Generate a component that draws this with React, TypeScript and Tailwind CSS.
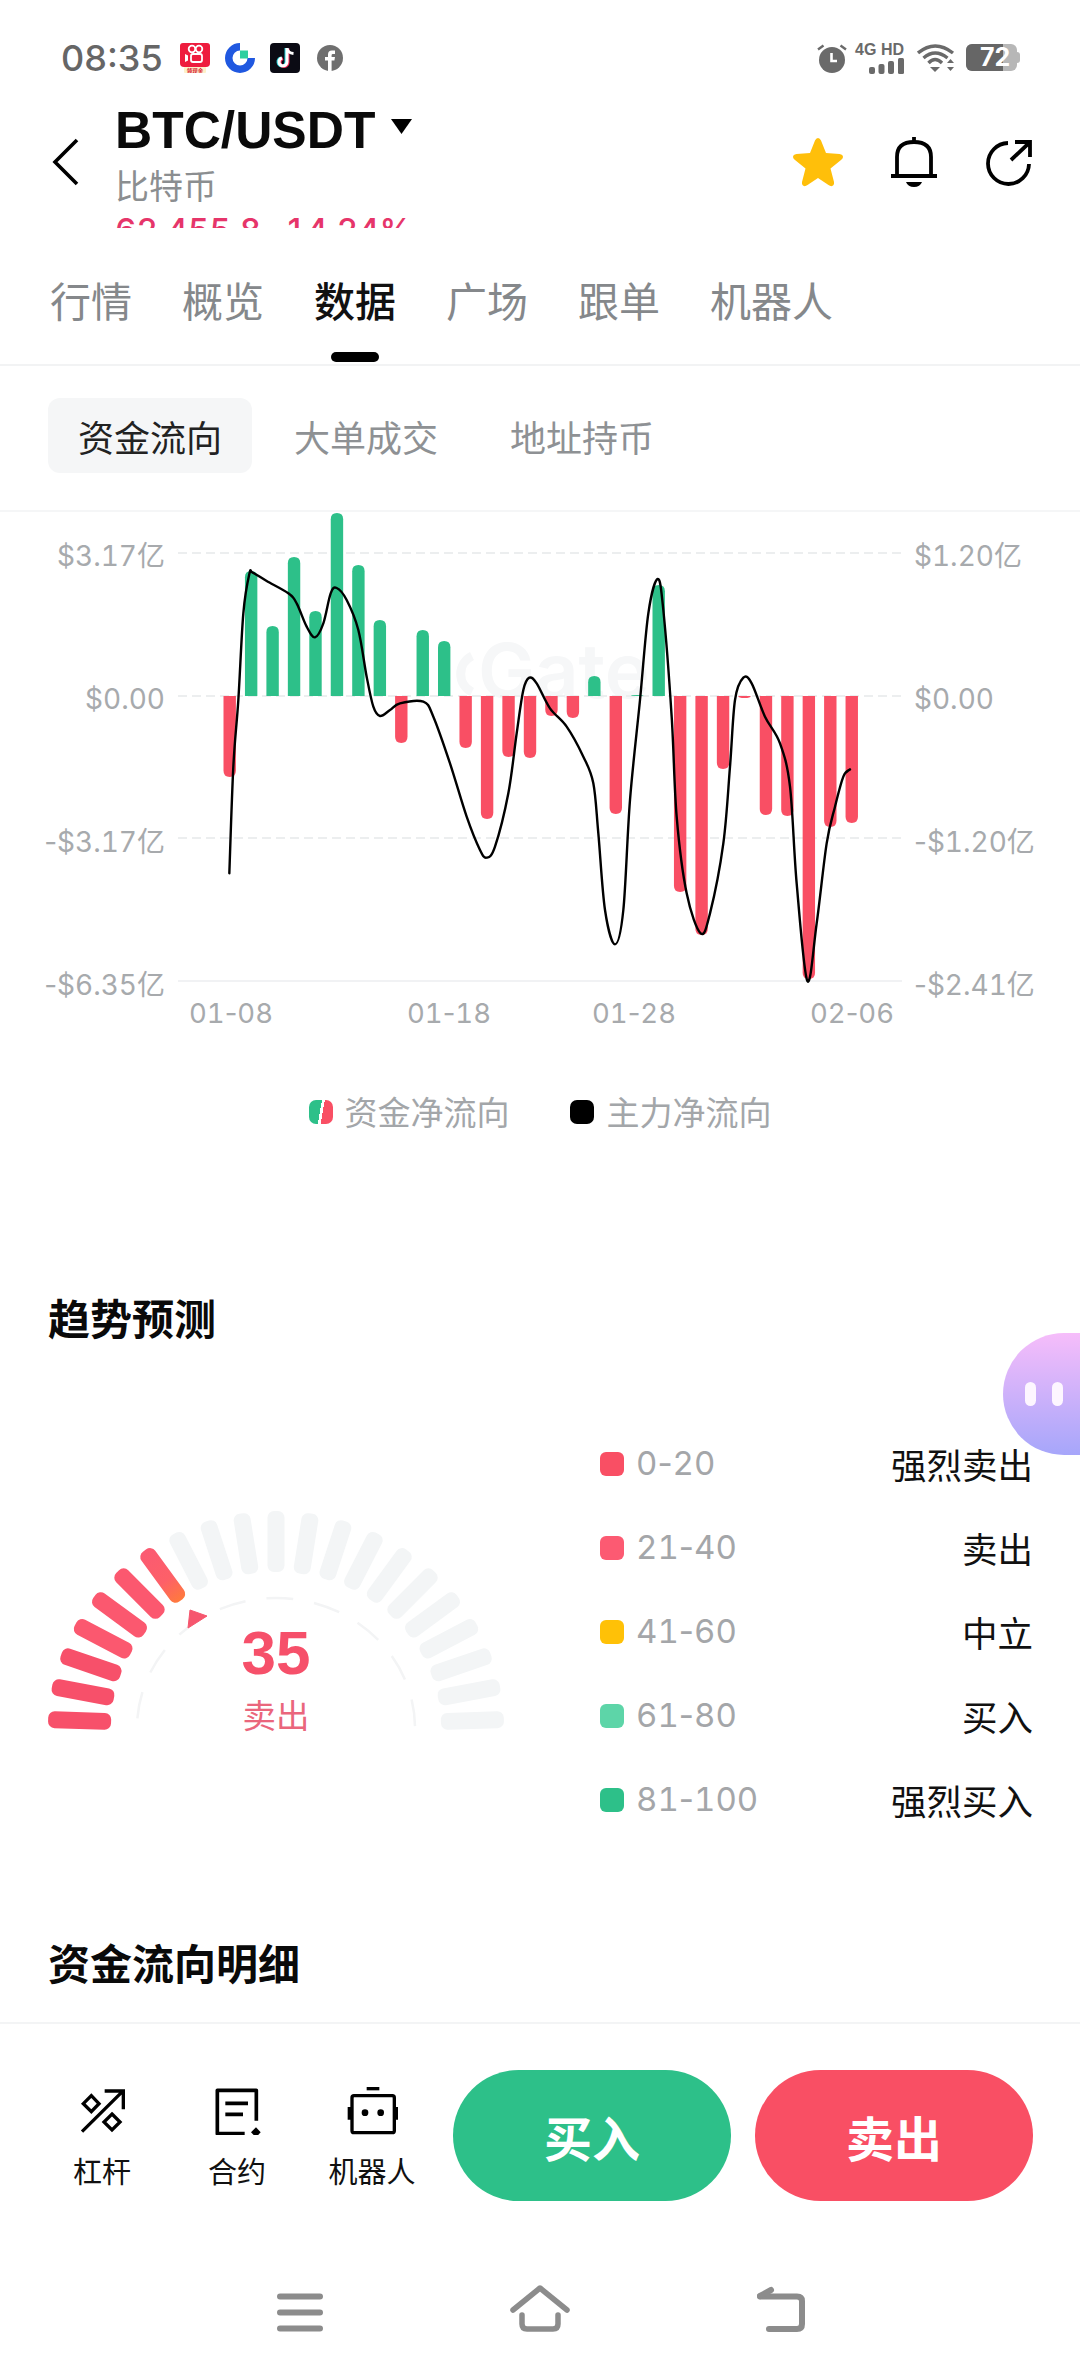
import React from 'react';

const CJK = "font-['Noto_Sans_CJK_SC',sans-serif]";
const NUM = "font-['Inter','Noto_Sans_CJK_SC',sans-serif] tabular-nums";

const GREEN = '#2dc089';
const RED = '#f94f64';

// bars: page x comes from the index, value is the page y of the free end
const ZERO = 696;
const BARS = [777, 571, 626, 557, 611, 513, 565, 620, 743, 630, 641, 748, 819, 757, 758, 716, 718, 676, 814, 695, 585, 892, 935, 769, 698, 815, 816, 979, 827, 823];

const LINE_A = [[88, 1120], [100, 800], [115, 600], [130, 340], [148, 222], [158, 218], [200, 243], [265, 280], [290, 310], [320, 380], [345, 412], [370, 370], [392, 280], [410, 264], [440, 300], [475, 390], [500, 530], [520, 620], [540, 648], [570, 630], [600, 610], [670, 605], [700, 650], [750, 790], [800, 950], [840, 1050], [860, 1073], [885, 1040], [925, 880], [950, 700], [970, 570], [988, 533], [1010, 550], [1050, 625], [1100, 680], [1150, 770], [1180, 850], [1195, 1000], [1215, 1230], [1245, 1333], [1270, 1230], [1290, 900], [1320, 600], [1345, 340]];
const LINE_B = [[293, 237], [310, 330], [335, 650], [350, 950], [380, 1180], [422, 1300], [450, 1240], [490, 1030], [510, 800], [525, 600], [550, 533], [575, 550], [615, 650], [660, 730], [690, 860], [710, 1150], [742, 1443], [770, 1270], [800, 1030], [825, 920], [850, 830], [870, 808]];

function linePath() {
  const pts = [
    ...LINE_A.map(([x, y]) => [200 + x / 3, 500 + y / 3]),
    ...LINE_B.map(([x, y]) => [560 + x / 3, 500 + y / 3]),
  ];
  let d = `M${pts[0][0]} ${pts[0][1]}`;
  for (let i = 0; i < pts.length - 1; i++) {
    const p0 = pts[Math.max(i - 1, 0)];
    const p1 = pts[i];
    const p2 = pts[i + 1];
    const p3 = pts[Math.min(i + 2, pts.length - 1)];
    d += `C${p1[0] + (p2[0] - p0[0]) / 6} ${p1[1] + (p2[1] - p0[1]) / 6} ${p2[0] - (p3[0] - p1[0]) / 6} ${p2[1] - (p3[1] - p1[1]) / 6} ${p2[0]} ${p2[1]}`;
  }
  return d;
}

function barPath(i: number, end: number) {
  const x = 229.7 + 21.45 * i;
  const hw = 6.2;
  const up = end < ZERO;
  const r = Math.min(hw, Math.abs(end - ZERO));
  const s = up ? 1 : -1;
  return `M${x - hw} ${ZERO}V${end + s * r}Q${x - hw} ${end} ${x} ${end}Q${x + hw} ${end} ${x + hw} ${end + s * r}V${ZERO}Z`;
}

// digits stay tabular, the hyphen keeps its normal width
function Num({ text }: { text: string }) {
  const parts = text.split('-');
  return (
    <>
      {parts.map((part, i) => (
        <React.Fragment key={i}>
          {i > 0 && <span className="normal-nums">-</span>}
          {part}
        </React.Fragment>
      ))}
    </>
  );
}

function Chart() {
  return (
    <svg width="724" height="476" viewBox="178 512 724 476" className="block shrink-0">
      {[553, 696, 838].map((y) => (
        <line key={y} x1="178" x2="902" y1={y} y2={y} stroke="#eceeef" strokeWidth="2" strokeDasharray="9 5" />
      ))}
      <line x1="178" x2="902" y1="981" y2="981" stroke="#f1f2f4" strokeWidth="2" />
      {BARS.map((end, i) => (
        <path key={i} d={barPath(i, end)} fill={end < ZERO ? GREEN : RED} />
      ))}
      <path d={linePath()} fill="none" stroke="#000" strokeWidth="2.4" strokeLinejoin="round" strokeLinecap="round" />
    </svg>
  );
}

function Gauge() {
  const cx = 276;
  const cy = 1727;
  const bars = Array.from({ length: 21 }, (_, i) => {
    const a = ((178 - i * 8.8) * Math.PI) / 180;
    const c = Math.cos(a);
    const s = Math.sin(a);
    const x1 = cx + 228 * c;
    const y1 = cy - 216 * s;
    const x2 = cx + 165 * c;
    const y2 = cy - 155 * s;
    return {
      i,
      x1,
      y1,
      len: Math.hypot(x2 - x1, y2 - y1),
      deg: (Math.atan2(y2 - y1, x2 - x1) * 180) / Math.PI,
    };
  });
  return (
    <svg width="480" height="260" viewBox="40 1490 480 260" className="block">
      <defs>
        <linearGradient id="tip" x1="0" y1="0" x2="1" y2="0">
          <stop offset="0" stopColor="#fb5a72" />
          <stop offset="0.6" stopColor="#fd6068" />
          <stop offset="1" stopColor="#ff7a3d" />
        </linearGradient>
      </defs>
      <ellipse cx={cx} cy="1728" rx="139" ry="130" fill="none" stroke="#f3f4f5" strokeWidth="2.5" strokeDasharray="28 22" pathLength="880" />
      <rect x="40" y="1728" width="480" height="30" fill="#fff" />
      {bars.map((b) => (
        <rect
          key={b.i}
          x={b.x1}
          y={b.y1 - 8.5}
          width={b.len}
          height="17"
          rx="6.5"
          transform={`rotate(${b.deg} ${b.x1} ${b.y1})`}
          fill={b.i < 6 ? (b.i < 3 ? '#f7506a' : '#fb586f') : b.i === 6 ? 'url(#tip)' : '#f3f5f6'}
        />
      ))}
      <path d="M190 1610L207 1616L188 1628Z" fill="#f6566e" stroke="#f6566e" strokeWidth="1" strokeLinejoin="round" />
    </svg>
  );
}

function StatusIcons() {
  return (
    <div className="flex items-center">
      {/* 快手 */}
      <svg width="30" height="30" viewBox="0 0 30 30" className="ml-[17px]">
        <path d="M3 0H27Q30 0 30 3V20Q30 24 26 24H4Q0 24 0 20V3Q0 0 3 0Z" fill="#ee1c3e" />
        <rect x="4" y="24" width="22" height="6" rx="1" fill="#fdf1c9" />
        <text x="15" y="29.5" fontSize="5.5" textAnchor="middle" fill="#d8152f" fontWeight="700" fontFamily="Noto Sans CJK SC">领现金</text>
        <circle cx="12" cy="6" r="3.3" fill="none" stroke="#fff" strokeWidth="1.8" />
        <circle cx="19" cy="6" r="3.3" fill="none" stroke="#fff" strokeWidth="1.8" />
        <rect x="11" y="11" width="11" height="8" rx="2" fill="none" stroke="#fff" strokeWidth="1.8" />
        <path d="M8 12.5L5 11V19L8 17.5Z" fill="#fff" />
      </svg>
      {/* gate */}
      <svg width="30" height="30" viewBox="0 0 30 30" className="ml-[15px]">
        <path d="M15 0A15 15 0 1 0 30 15H22.5A7.5 7.5 0 1 1 15 7.5Z" fill="#2058e0" />
        <rect x="15" y="7.5" width="8" height="8" fill="#2ecfa0" />
      </svg>
      {/* tiktok */}
      <svg width="30" height="30" viewBox="0 0 30 30" className="ml-[15px]">
        <rect width="30" height="30" rx="4" fill="#0b0b14" />
        <path d="M17 5V19A4 4 0 1 1 12 15" fill="none" stroke="#25d4dc" strokeWidth="3" transform="translate(-1 0)" />
        <path d="M17 5V19A4 4 0 1 1 12 15" fill="none" stroke="#f5305c" strokeWidth="3" transform="translate(1 0.6)" />
        <path d="M17 5V19A4 4 0 1 1 12 15" fill="none" stroke="#fff" strokeWidth="3" />
        <path d="M17 5.5Q18 10 23.5 10.5" fill="none" stroke="#fff" strokeWidth="3" />
      </svg>
      {/* facebook */}
      <svg width="26" height="26" viewBox="0 0 26 26" className="ml-[17px]">
        <circle cx="13" cy="13" r="13" fill="#6f6f6f" />
        <path d="M11 26V15.5H8V12H11V9.5Q11 5.5 15 5.5H18V9H15.8Q14.6 9 14.6 10.2V12H18L17.4 15.5H14.6V26Z" fill="#fff" />
      </svg>
    </div>
  );
}

function StatusRight() {
  return (
    <div className="flex items-center pr-[60px]">
      <svg width="30" height="30" viewBox="0 0 30 30">
        <circle cx="15" cy="17" r="13" fill="#6a6a6a" />
        <path d="M14.5 10V18H20" fill="none" stroke="#fff" strokeWidth="2.6" />
        <path d="M1 6.5L6.5 2.5M29 6.5L23.5 2.5" stroke="#6a6a6a" strokeWidth="2.4" />
      </svg>
      <div className="ml-[9px] flex w-[48px] flex-col items-end">
        <span className="font-['Liberation_Sans',sans-serif] text-[16px] leading-[15px] font-bold whitespace-nowrap text-[#6a6a6a]">4G HD</span>
        <svg width="35" height="16" viewBox="0 0 35 16" className="mt-[1px]">
          <rect x="0" y="9" width="6" height="7" rx="2" fill="#6a6a6a" />
          <rect x="9.5" y="6" width="6" height="10" rx="2" fill="#6a6a6a" />
          <rect x="19" y="3" width="6" height="13" rx="2" fill="#6a6a6a" />
          <rect x="29" y="0" width="6" height="16" rx="1.5" fill="#6a6a6a" />
        </svg>
      </div>
      <svg width="38" height="30" viewBox="0 0 38 30" className="ml-[13px]">
        <path d="M1 10Q18 -4 36 10M6.5 15Q18 5 30.5 15M11.5 20Q18 13 25 20" fill="none" stroke="#6a6a6a" strokeWidth="3.4" />
        <path d="M13 24H23L18 29Z" fill="#6a6a6a" />
        <path d="M30 20L33.5 16L37 20ZM30 24H37L33.5 28Z" fill="#6a6a6a" />
      </svg>
      <div className="relative ml-[11px] h-[27px] w-[54px]">
        <div className="absolute left-0 top-0 h-full w-[51px] rounded-[6px] bg-[#b7b7b7]" />
        <div className="absolute right-0 top-[8px] h-[11px] w-[4px] rounded-r-[3px] bg-[#b7b7b7]" />
        <div className="absolute left-0 top-0 h-full w-[37px] rounded-l-[6px] bg-[#666666]" />
        <span className="absolute left-[14px] top-[-1px] font-['Inter',sans-serif] text-[25px] leading-[29px] font-bold text-white">72</span>
      </div>
    </div>
  );
}

function Leverage() {
  return (
    <svg width="48" height="48" viewBox="50 38 144 144" fill="none" stroke="#000" strokeWidth="10">
      <path d="M62 172L183 52M130 50H186V105" />
      <path d="M90 64L113 88L90 112L66 88Z" />
      <path d="M152 119L176 143L152 167L128 143Z" />
    </svg>
  );
}

function Contract() {
  return (
    <svg width="48" height="48" viewBox="460 32 144 144" fill="none" stroke="#000" strokeWidth="11">
      <path d="M590 133V42H473V172H555" strokeLinejoin="round" />
      <path d="M497 81H565M497 114H550" />
      <path d="M589 153L603 168L589 183L574 168Z" fill="#000" stroke="none" />
    </svg>
  );
}

function Robot() {
  return (
    <svg width="52" height="52" viewBox="858 32 156 156" fill="none" stroke="#000" strokeWidth="10">
      <rect x="876" y="64" width="127" height="111" rx="6" />
      <path d="M920 43H958" />
      <path d="M868 98V136M1010 98V136" />
      <circle cx="915" cy="115" r="10" fill="#000" stroke="none" />
      <circle cx="962" cy="115" r="10" fill="#000" stroke="none" />
    </svg>
  );
}

const TABS = ['行情', '概览', '数据', '广场', '跟单', '机器人'];
const RANGES = [
  { c: 'bg-[#f94f64]', r: '0-20', t: '强烈卖出' },
  { c: 'bg-[#fc5a72]', r: '21-40', t: '卖出' },
  { c: 'bg-[#ffc107]', r: '41-60', t: '中立' },
  { c: 'bg-[#5dd5a8]', r: '61-80', t: '买入' },
  { c: 'bg-[#2dc089]', r: '81-100', t: '强烈买入' },
];

export default function App() {
  return (
    <div className={`relative flex h-[2376px] w-[1080px] flex-col overflow-hidden bg-white ${CJK}`}>
      {/* status bar */}
      <div className="flex h-[100px] shrink-0 items-center justify-between pl-[61px] pt-[15px]">
        <div className="flex items-center">
          <span className="font-['Inter',sans-serif] text-[36px] font-medium text-[#666666]">08:35</span>
          <StatusIcons />
        </div>
        <StatusRight />
      </div>

      {/* header */}
      <div className="flex h-[128px] shrink-0 items-start overflow-hidden">
        <svg width="28" height="48" viewBox="0 0 28 48" className="ml-[52px] mt-[38px] shrink-0">
          <path d="M25 2L3 24L25 46" fill="none" stroke="#000" strokeWidth="3.6" />
        </svg>
        <div className="ml-[35px] flex flex-col">
          <div className="flex h-[60px] items-center">
            <span className="font-['Liberation_Sans',sans-serif] text-[51.5px] leading-[60px] font-bold text-[#0a0a0a]">BTC/USDT</span>
            <svg width="21" height="15" viewBox="0 0 21 15" className="ml-[16px] mt-[-8px]">
              <path d="M0 0H21L10.5 15Z" fill="#000" />
            </svg>
          </div>
          <span className="h-[50px] text-[34px] leading-[50px] text-[#8b8e90]">比特币</span>
          <span className={`${NUM} text-[33px] leading-[40px] font-medium whitespace-pre text-[#e6356a]`}><Num text="62,455.8 -14.24%" /></span>
        </div>
        <div className="ml-auto mr-[47px] mt-[36px] flex items-center">
          <svg width="54" height="52" viewBox="0 0 54 52">
            <path d="M27 2Q29 2 30 4.5L35 17L48.500 18Q52 18.500 52 21Q52 22.500 50 24L39.500 32.500L43 46Q43.500 49 41 50Q39.500 50.500 37.500 49L27 42L16.500 49Q14.500 50.500 13 50Q10.500 49 11 46L14.500 32.500L4 24Q2 22.500 2 21Q2 18.500 5.500 18L19 17L24 4.500Q25 2 27 2Z" fill="#ffbf0a" />
          </svg>
          <svg width="48" height="52" viewBox="0 0 48 52" className="ml-[45px]" fill="none" stroke="#000" strokeWidth="3.8">
            <path d="M7 39V21Q7 6 24 6Q41 6 41 21V39" />
            <path d="M1 40H47" strokeWidth="4" />
            <path d="M24 1V6" />
            <path d="M16 46H32Q30 51 24 51Q18 51 16 46Z" fill="#000" stroke="none" />
          </svg>
          <svg width="48" height="48" viewBox="0 0 48 48" className="ml-[47px]" fill="none" stroke="#000" strokeWidth="3.8">
            <path d="M23 5A20.500 20.500 0 1 0 44 26" />
            <path d="M26 22L44 5M30 4H45V19" />
          </svg>
        </div>
      </div>

      {/* tabs */}
      <div className="h-[138px] shrink-0 border-b-2 border-[#f2f3f4] pt-[47px]">
        <div className="flex gap-[50px] pl-[50px]">
          {TABS.map((tab) => (
            <div key={tab} className={`relative text-[41px] leading-[48px] ${tab === '数据' ? 'font-medium text-[#111111]' : 'text-[#85888b]'}`}>
              {tab}
              {tab === '数据' && (
                <div className="absolute left-1/2 top-[77px] h-[10px] w-[48px] -translate-x-1/2 rounded-full bg-black" />
              )}
            </div>
          ))}
        </div>
      </div>

      {/* sub tabs */}
      <div className="flex h-[146px] shrink-0 items-start gap-3 border-b-2 border-[#f5f6f7] pl-[48px] pt-[32px]">
        <div className="flex h-[75px] items-center rounded-[12px] bg-[#f5f6f7] px-[30px] text-[36px] text-[#222222]">资金流向</div>
        <div className="flex h-[75px] items-center px-[30px] text-[36px] text-[#8e9194]">大单成交</div>
        <div className="flex h-[75px] items-center px-[30px] text-[36px] text-[#8e9194]">地址持币</div>
      </div>

      {/* chart */}
      <div className="relative flex h-[476px] shrink-0">
        <div className="absolute left-[448px] top-[118px] flex items-center text-[#f6f7f8]">
          <svg width="28" height="48" viewBox="0 0 28 48" className="mt-[8px]">
            <path d="M24 6A20 20 0 0 0 24 42" fill="none" stroke="#f6f7f8" strokeWidth="9" />
          </svg>
          <span className="ml-[2px] font-['Inter',sans-serif] text-[76px] leading-[80px] font-semibold">Gate</span>
        </div>
        <div className={`${NUM} relative flex w-[178px] shrink-0 flex-col items-end gap-[103px] pr-[13px] pt-[24px] text-[28px] leading-[40px] text-[#a7aaad]`}>
          <span>$3.17亿</span>
          <span>$0.00</span>
          <span><Num text="-$3.17亿" /></span>
          <span><Num text="-$6.35亿" /></span>
        </div>
        <div className="relative">
          <Chart />
        </div>
        <div className={`${NUM} relative flex flex-col gap-[103px] whitespace-nowrap pl-[12px] pt-[24px] text-[28px] leading-[40px] text-[#a7aaad]`}>
          <span>$1.20亿</span>
          <span>$0.00</span>
          <span><Num text="-$1.20亿" /></span>
          <span><Num text="-$2.41亿" /></span>
        </div>
      </div>

      {/* x axis */}
      <div className={`${NUM} mt-[3px] flex h-[44px] shrink-0 whitespace-nowrap text-[27.5px] leading-[44px] text-[#a7aaad]`}>
        <span className="ml-[189px] w-[81px] text-center"><Num text="01-08" /></span>
        <span className="ml-[137px] w-[81px] text-center"><Num text="01-18" /></span>
        <span className="ml-[104px] w-[81px] text-center"><Num text="01-28" /></span>
        <span className="ml-[137px] w-[81px] text-center"><Num text="02-06" /></span>
      </div>

      {/* chart legend */}
      <div className="mt-[53px] flex h-[48px] shrink-0 items-center justify-center text-[33px] text-[#a3a6a9]">
        <div className="h-[24px] w-[24px] overflow-hidden rounded-[7px] bg-[linear-gradient(100deg,#2dc089_46%,#ffffff_46%,#ffffff_56%,#f94f64_56%)]" />
        <span className="ml-[12px]">资金净流向</span>
        <div className="ml-[60px] h-[24px] w-[24px] rounded-[7px] bg-black" />
        <span className="ml-[13px]">主力净流向</span>
      </div>

      {/* trend forecast */}
      <div className="mt-[153px] h-[56px] shrink-0 pl-[48px] text-[42px] leading-[56px] font-bold text-[#0a0a0a]">趋势预测</div>

      <div className="mt-[77px] flex h-[420px] shrink-0 items-start">
        <div className="relative ml-[40px] mt-[68px] h-[260px] w-[480px] shrink-0">
          <Gauge />
          <div className="absolute inset-x-0 top-[129px] flex flex-col items-center pr-[8px]">
            <span className="font-['Liberation_Sans',sans-serif] text-[62px] leading-[68px] font-bold text-[#f6506a]">35</span>
            <span className="mt-[5px] text-[33.500px] leading-[44px] text-[#ea667c]">卖出</span>
          </div>
        </div>
        <div className="ml-[80px] flex w-[433px] flex-col">
          {RANGES.map((row) => (
            <div key={row.r} className="flex h-[84px] items-center">
              <div className={`h-[24px] w-[24px] rounded-[6px] ${row.c}`} />
              <span className={`${NUM} ml-[12px] text-[33px] text-[#a4a6a9]`}><Num text={row.r} /></span>
              <span className="ml-auto text-[35.500px] text-[#111111]">{row.t}</span>
            </div>
          ))}
        </div>
      </div>

      {/* flow detail */}
      <div className="mt-[92px] h-[56px] shrink-0 pl-[48px] text-[42px] leading-[56px] font-bold text-[#0a0a0a]">资金流向明细</div>

      {/* floating assistant */}
      <div className="absolute right-0 top-[1333px] flex h-[122px] w-[77px] items-center gap-[16px] rounded-l-full bg-[linear-gradient(180deg,#f6bdfa,#a6a6fa)] pl-[22px]">
        <div className="h-[24px] w-[11px] rounded-full bg-[#fdf6ff]" />
        <div className="h-[24px] w-[11px] rounded-full bg-[#fdf6ff]" />
      </div>

      {/* bottom bar */}
      <div className="absolute inset-x-0 top-[2022px] flex h-[200px] items-start border-t-2 border-[#f3f4f5] pt-[46px]">
        <div className="flex w-[453px] shrink-0 items-start pl-[58px] pt-[15px]">
          <div className="flex w-[88px] flex-col items-center">
            <div className="flex h-[52px] items-center"><Leverage /></div>
            <span className="mt-[13px] text-[29px] leading-[40px] text-[#111111]">杠杆</span>
          </div>
          <div className="ml-[47px] flex w-[88px] flex-col items-center">
            <div className="flex h-[52px] items-center"><Contract /></div>
            <span className="mt-[13px] text-[29px] leading-[40px] text-[#111111]">合约</span>
          </div>
          <div className="ml-[47px] flex w-[88px] flex-col items-center">
            <div className="flex h-[52px] items-center"><Robot /></div>
            <span className="mt-[13px] whitespace-nowrap text-[29px] leading-[40px] text-[#111111]">机器人</span>
          </div>
        </div>
        <div className="flex gap-[24px]">
          <div className="flex h-[131px] w-[278px] items-center justify-center rounded-full bg-[#2dc089] text-[48px] font-bold text-white">买入</div>
          <div className="flex h-[131px] w-[278px] items-center justify-center rounded-full bg-[#f94f64] text-[48px] font-bold text-white">卖出</div>
        </div>
      </div>

      {/* system nav */}
      <div className="absolute inset-x-0 top-[2286px] flex h-[48px] pl-[277px]">
        <svg width="46" height="48" viewBox="277 2290 46 48" fill="none" stroke="#8c8c8c" strokeWidth="6" strokeLinecap="round">
          <path d="M280 2300.500H320M280 2316.500H320M280 2332.500H320" />
        </svg>
        <svg width="60" height="48" viewBox="510 2290 60 48" className="ml-[187px] self-start" fill="none" stroke="#8c8c8c" strokeWidth="5.500" strokeLinecap="round" strokeLinejoin="round" overflow="visible">
          <path d="M513 2314L540 2292L567 2314" />
          <path d="M522 2319V2328Q522 2333 527 2333H553Q558 2333 558 2328V2319" />
        </svg>
        <svg width="50" height="48" viewBox="756 2290 50 48" className="ml-[187px]" fill="none" stroke="#8c8c8c" strokeWidth="6" strokeLinecap="round" strokeLinejoin="round">
          <path d="M759 2300.500H796Q801 2300.500 801 2305V2328Q801 2333 796 2333H768" />
          <path d="M759 2300L770 2294" />
        </svg>
      </div>
    </div>
  );
}
